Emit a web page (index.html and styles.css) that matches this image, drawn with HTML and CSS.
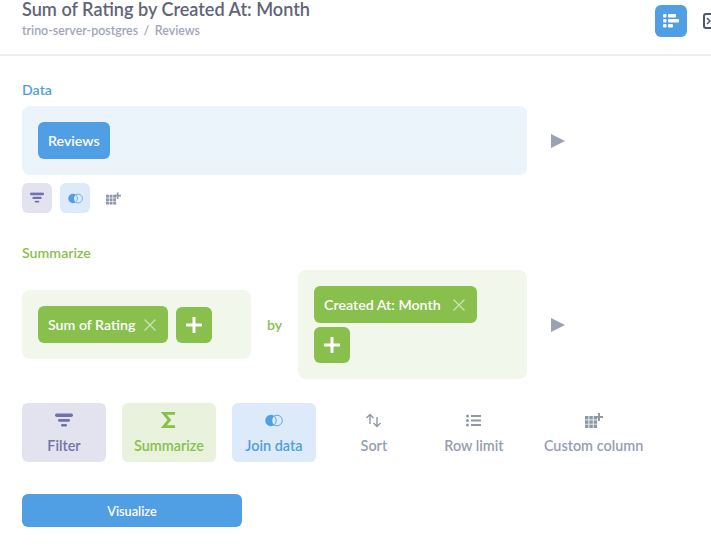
FILE: index.html
```html
<!DOCTYPE html>
<html lang="en">
<head>
    <meta charset="UTF-8">
    <title>Sum of Rating by Created At: Month</title>
    <link rel="stylesheet" href="styles.css">
</head>
<body>
    <header class="topbar">
        <div class="heading">
            <h1>Sum of Rating by Created At: Month</h1>
            <p class="crumbs"><span>trino-server-postgres</span><span class="slash">/</span><span>Reviews</span></p>
        </div>
        <div class="topbar-icons">
            <button class="notebook-btn">
                <svg width="16" height="14" viewBox="0 0 16 14" fill="#fff">
                    <rect x="0" y="0" width="3.500" height="3.500" rx="1"/><rect x="5" y="0" width="8" height="3.500" rx="1"/>
                    <rect x="0" y="5" width="3.500" height="3.500" rx="1"/><rect x="5" y="5" width="11" height="3.500" rx="1"/>
                    <rect x="0" y="10" width="3.500" height="3.500" rx="1"/><rect x="5" y="10" width="5" height="3.500" rx="1"/>
                </svg>
            </button>
            <svg class="sql-icon" width="16" height="16" viewBox="0 0 16 16" fill="none" stroke="#4c5773" stroke-width="2">
                <rect x="1" y="1" width="14" height="14" rx="2"/>
                <path d="M4 5l3 3-3 3" stroke-width="1.500"/>
            </svg>
        </div>
    </header>

    <main>
        <section class="step">
            <h2 class="label label-data">Data</h2>
            <div class="step-row">
                <div class="box box-data">
                    <span class="pill pill-blue">Reviews</span>
                </div>
                <span class="run-arrow"></span>
            </div>
            <div class="mini-actions">
                <button class="mini mini-filter">
                    <svg width="14" height="12" viewBox="0 0 18 15" fill="#7172ad"><use href="#funnel"/></svg>
                </button>
                <button class="mini mini-join">
                    <svg width="15" height="11" viewBox="0 0 18 13"><use href="#join" fill="#509ee3" stroke="#509ee3"/></svg>
                </button>
                <button class="mini">
                    <svg width="15" height="13" viewBox="0 0 18 15" fill="#8d99a6"><use href="#grid-plus"/></svg>
                </button>
            </div>
        </section>

        <section class="step step-summarize">
            <h2 class="label label-summarize">Summarize</h2>
            <div class="step-row">
                <div class="summarize-parts">
                    <div class="box box-green box-metric">
                        <span class="pill pill-green">Sum of Rating<svg class="close" width="12" height="12" viewBox="0 0 12 12"><path d="M.5.5l11 11M11.500.5l-11 11" stroke="#cde3b2" stroke-width="1.300"/></svg></span>
                        <button class="add"><svg width="16" height="16" viewBox="0 0 16 16" fill="#fff"><rect x="6.500" y="0" width="3" height="16" rx=".6"/><rect x="0" y="6.500" width="16" height="3" rx=".6"/></svg></button>
                    </div>
                    <span class="by">by</span>
                    <div class="box box-green box-breakout">
                        <span class="pill pill-green">Created At: Month<svg class="close" width="12" height="12" viewBox="0 0 12 12"><path d="M.5.5l11 11M11.500.5l-11 11" stroke="#cde3b2" stroke-width="1.300"/></svg></span>
                        <button class="add"><svg width="16" height="16" viewBox="0 0 16 16" fill="#fff"><rect x="6.500" y="0" width="3" height="16" rx=".6"/><rect x="0" y="6.500" width="16" height="3" rx=".6"/></svg></button>
                    </div>
                </div>
                <span class="run-arrow"></span>
            </div>
        </section>

        <div class="actions">
            <button class="action action-filter">
                <span class="action-icon"><svg width="18" height="15" viewBox="0 0 18 15" fill="#7172ad"><use href="#funnel"/></svg></span>
                <span>Filter</span>
            </button>
            <button class="action action-summarize">
                <span class="action-icon"><svg width="15" height="18" viewBox="0 0 16 18" fill="none" stroke="#88bf4d" stroke-width="3"><path d="M15 2H3l6 7-6 7h12"/></svg></span>
                <span>Summarize</span>
            </button>
            <button class="action action-join">
                <span class="action-icon"><svg width="18" height="13" viewBox="0 0 18 13"><use href="#join" fill="#509ee3" stroke="#509ee3"/></svg></span>
                <span>Join data</span>
            </button>
            <button class="action">
                <span class="action-icon"><svg width="17" height="15" viewBox="0 0 17 15" fill="none" stroke="#8d99a6" stroke-width="1.400"><path d="M5 11V1.500M1.500 5L5 1.500 8.500 5M12 4v9.500M8.500 10l3.500 3.500 3.500-3.500"/></svg></span>
                <span>Sort</span>
            </button>
            <button class="action">
                <span class="action-icon"><svg width="15" height="13" viewBox="0 0 15 13" fill="#8d99a6"><circle cx="1.500" cy="2" r="1.500"/><circle cx="1.500" cy="6.500" r="1.500"/><circle cx="1.500" cy="11" r="1.500"/><rect x="5" y="1" width="10" height="2"/><rect x="5" y="5.500" width="10" height="2"/><rect x="5" y="10" width="10" height="2"/></svg></span>
                <span>Row limit</span>
            </button>
            <button class="action">
                <span class="action-icon"><svg width="18" height="15" viewBox="0 0 18 15" fill="#8d99a6"><use href="#grid-plus"/></svg></span>
                <span>Custom column</span>
            </button>
        </div>

        <button class="visualize">Visualize</button>
    </main>

    <svg class="defs" width="0" height="0">
        <symbol id="funnel" viewBox="0 0 18 15">
            <rect x="0" y="0.500" width="18" height="3.400" rx="1.700"/><rect x="3" y="6" width="12" height="2.800" rx="1.400"/><rect x="6" y="11" width="6" height="2.400" rx="1.200"/>
        </symbol>
        <symbol id="join" viewBox="0 0 18 13">
            <circle cx="6" cy="6.500" r="5.700" stroke="none"/>
            <circle cx="12" cy="6.500" r="5.300" fill="none" stroke-width="0.900"/>
            <path d="M9 2.300a5.700 5.700 0 0 1 0 8.400a5.700 5.700 0 0 1 0-8.400z" fill="#dceaf9" stroke="none"/>
        </symbol>
        <symbol id="grid-plus" viewBox="0 0 18 15">
            <rect x="0" y="3" width="3.500" height="3.500"/><rect x="4.300" y="3" width="3.500" height="3.500"/><rect x="8.600" y="3" width="3.500" height="3.500"/>
            <rect x="0" y="7.300" width="3.500" height="3.500"/><rect x="4.300" y="7.300" width="3.500" height="3.500"/><rect x="8.600" y="7.300" width="3.500" height="3.500"/>
            <rect x="0" y="11.500" width="3.500" height="3.500"/><rect x="4.300" y="11.500" width="3.500" height="3.500"/><rect x="8.600" y="11.500" width="3.500" height="3.500"/>
            <path d="M13 0h2v3h3v2h-3v3h-2V5h-3V3h3z"/>
        </symbol>
    </svg>
</body>
</html>
```

FILE: styles.css
```css
body {
    font-family: Lato, "Open Sans", sans-serif;
    margin: 0;
    height: 555px;
    overflow: hidden;
    background-color: #fff;
}

button {
    font-family: inherit;
    border: none;
    cursor: pointer;
}

.defs {
    display: block;
}

.topbar {
    display: flex;
    justify-content: space-between;
    height: 54px;
    padding-left: 22px;
    border-bottom: 2px solid #eeeeef;
}

h1 {
    margin: 0;
    font-size: 18.100px;
    line-height: 18px;
    font-weight: 600;
    color: #5f6577;
    white-space: nowrap;
}

.crumbs {
    margin: 6px 0 0;
    display: flex;
    font-size: 12.400px;
    line-height: 14px;
    font-weight: 600;
    color: #a0a6b8;
}

.slash {
    margin: 0 5.500px;
}

.topbar-icons {
    display: flex;
    gap: 16px;
    margin-right: -8px;
    padding-top: 5px;
}

.notebook-btn {
    display: flex;
    align-items: center;
    justify-content: center;
    width: 32px;
    height: 32px;
    padding: 0;
    border-radius: 6px;
    background-color: #509ee3;
}

.sql-icon {
    margin-top: 8px;
}

main {
    padding: 0 22px;
}

.step {
    margin-top: 25px;
}

.step-summarize {
    margin-top: 31px;
}

.label {
    margin: 0 0 8px;
    font-size: 14.200px;
    line-height: 17px;
    font-weight: 600;
}

.label-data {
    color: #509ee3;
}

.label-summarize {
    color: #88bf4d;
    margin-bottom: 9px;
}

.step-row {
    display: flex;
    align-items: center;
    gap: 24px;
}

.box {
    padding: 16px;
    border-radius: 8px;
    box-sizing: border-box;
}

.box-data {
    width: 505px;
    height: 69px;
    background-color: #ebf3fb;
}

.box-green {
    background-color: #f1f7ea;
    display: flex;
    flex-wrap: wrap;
    gap: 4px 8px;
    width: 229px;
}

.box-metric {
    align-items: center;
}

.box-breakout {
    align-content: flex-start;
}

.pill {
    display: inline-flex;
    align-items: center;
    height: 37px;
    padding: 0 10px;
    border-radius: 6px;
    box-sizing: border-box;
    color: #fff;
    font-size: 14.200px;
    font-weight: 600;
    white-space: nowrap;
}

.pill-blue {
    background-color: #509ee3;
}

.pill-green {
    background-color: #88bf4d;
}

.close {
    margin-left: 9px;
    margin-right: 2px;
}

.box-breakout .close {
    margin-left: 12px;
}

.add {
    display: flex;
    align-items: center;
    justify-content: center;
    width: 36px;
    height: 36px;
    padding: 0;
    border-radius: 6px;
    background-color: #88bf4d;
}

.run-arrow {
    width: 0;
    height: 0;
    border-left: 14px solid #9aa0b5;
    border-top: 7.500px solid transparent;
    border-bottom: 7.500px solid transparent;
}

.mini-actions {
    display: flex;
    gap: 8px;
    margin-top: 8px;
}

.mini {
    display: flex;
    align-items: center;
    justify-content: center;
    width: 30px;
    height: 30px;
    padding: 0;
    border-radius: 6px;
    background: none;
}

.mini-filter {
    background-color: #e3e3f0;
}

.mini-join {
    background-color: #dceaf9;
}

.summarize-parts {
    display: flex;
    align-items: center;
    gap: 16px;
    width: 505px;
}

.by {
    font-size: 14.200px;
    font-weight: 600;
    color: #88bf4d;
}

.actions {
    display: flex;
    gap: 16px;
    margin-top: 24px;
}

.action {
    display: flex;
    flex-direction: column;
    align-items: center;
    gap: 8px;
    min-width: 84px;
    height: 59px;
    padding: 8px 12px;
    border-radius: 6px;
    background: none;
    color: #959fae;
    font-size: 14.400px;
    font-weight: 600;
    white-space: nowrap;
}

.action-icon {
    display: flex;
    align-items: center;
    height: 18px;
}

.action-filter {
    background-color: #e3e3f0;
    color: #7172ad;
}

.action-summarize {
    background-color: #e8f2dc;
    color: #88bf4d;
}

.action-join {
    background-color: #dceaf9;
    color: #509ee3;
}

.visualize {
    display: block;
    width: 220px;
    height: 33px;
    margin-top: 32px;
    padding: 0;
    border-radius: 6px;
    background-color: #509ee3;
    color: #fff;
    font-size: 12.700px;
    font-weight: 600;
}
```
